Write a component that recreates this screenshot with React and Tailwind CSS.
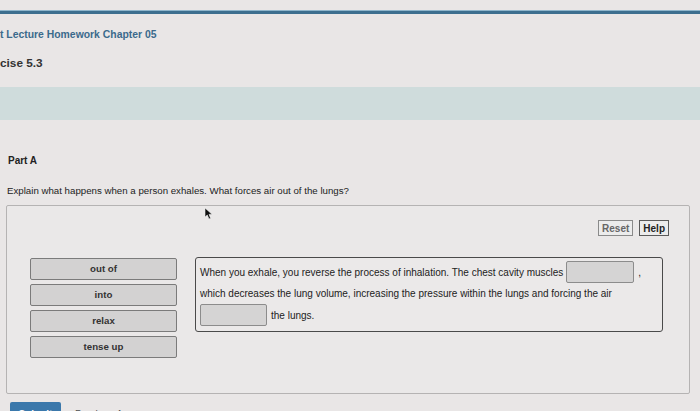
import React from "react";

const options = ["out of", "into", "relax", "tense up"];

function Blank({ className = "" }) {
  return <span className={"inline-block h-[22px] bg-[#d5d4d4] border border-[#8c8c8c] rounded-[2px] " + className} />;
}

export default function App() {
  return (
    <div className="relative w-[700px] h-[411px] overflow-hidden bg-[#e9e6e6] text-[#222] font-['Liberation_Sans',Arial,sans-serif]">
      <div className="mt-[10px] h-[1px] bg-[#8fb6cc]" />
      <div className="h-[3px] bg-[#3d6f8f]" />

      <h1 className="mt-[15px] text-[10.4px] leading-[12px] font-bold text-[#3b6a8c]">t Lecture Homework Chapter 05</h1>
      <h2 className="mt-[16px] text-[11.8px] leading-[13px] font-bold text-[#333]">cise 5.3</h2>

      <div className="mt-[17px] h-[33px] bg-[#cfdcdc]" />

      <div className="mt-[35px] pl-[8px] text-[10px] leading-[12px] font-bold text-[#222]">Part A</div>
      <p className="mt-[18px] pl-[7px] text-[9.7px] leading-[12px] text-[#222]">
        Explain what happens when a person exhales. What forces air out of the lungs?
      </p>

      <div className="relative mt-[8px] ml-[6px] w-[684px] h-[189px] border border-[#b5b3b3] rounded-[2px] bg-[#eae8e8]">
        <svg className="absolute left-[197px] top-[1px]" width="9" height="13" viewBox="0 0 9 13">
          <path d="M1 1 L1 10 L3.3 8 L5 12 L6.6 11.2 L5 7.4 L8 7.2 Z" fill="#111" stroke="#eee" strokeWidth="0.6" />
        </svg>

        <div className="flex justify-end gap-[6px] pt-[14px] pr-[20px]">
          <button className="h-[16px] px-[3px] border border-[#8a8a8a] bg-[#ececec] text-[10px] font-bold text-[#666]">Reset</button>
          <button className="h-[16px] px-[3px] border border-[#5a5a5a] bg-[#ececec] text-[10px] font-bold text-[#222]">Help</button>
        </div>

        <div className="flex mt-[22px] pl-[23px]">
          <div className="flex flex-col gap-[4px] w-[147px]">
            {options.map((o) => (
              <div
                key={o}
                className="h-[22px] flex items-center justify-center border border-[#7b7b7b] rounded-[2px] bg-[#d3d2d2] text-[9.7px] font-bold text-[#333]"
              >
                {o}
              </div>
            ))}
          </div>

          <div className="ml-[18px] -mt-[1px] w-[468px] h-[75px] border-[1.5px] border-[#4a4a4a] rounded-[3px] bg-[#ebe9e9] pl-[4px] pt-[3px] text-[10px] text-[#222]">
            <div className="flex items-center h-[22px]">
              <span>When you exhale, you reverse the process of inhalation. The chest cavity muscles</span>
              <Blank className="ml-[3px] w-[68px]" />
              <span className="ml-[4px]">,</span>
            </div>
            <div className="flex items-center h-[21px]">
              which decreases the lung volume, increasing the pressure within the lungs and forcing the air
            </div>
            <div className="flex items-start h-[22px]">
              <Blank className="w-[67px]" />
              <span className="ml-[4px] mt-[4px]">the lungs.</span>
            </div>
          </div>
        </div>
      </div>

      <div className="flex items-start gap-[14px] mt-[8px] pl-[10px]">
        <div className="w-[51px] h-[16px] rounded-[2px] bg-[#3b78ab] pt-[5px] text-center text-[10px] font-bold text-white">Submit</div>
        <span className="mt-[5px] text-[10px] text-[#555]">Previous Answers</span>
      </div>
    </div>
  );
}
